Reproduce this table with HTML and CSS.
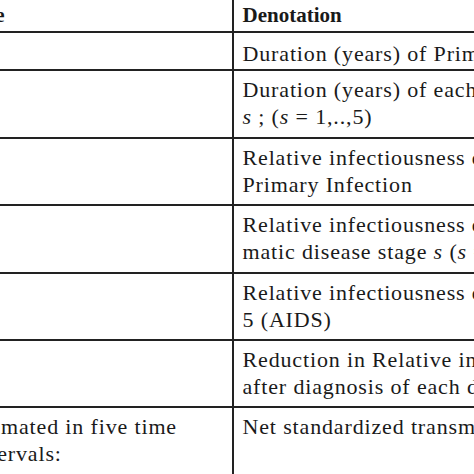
FILE: index.html
```html
<!DOCTYPE html>
<html>
<head>
<meta charset="utf-8">
<link rel="stylesheet" href="styles.css">
</head>
<body>
<div class="frame">
  <div class="table">
    <div class="cell left head first">Code</div>
    <div class="cell head">Denotation</div>

    <div class="cell left r1"></div>
    <div class="cell r1">Duration (years) of Primary Infection</div>

    <div class="cell left row"></div>
    <div class="cell row">Duration (years) of each disease stage<br><i>s</i> ; (<i>s</i> = 1,..,5)</div>

    <div class="cell left row"></div>
    <div class="cell row">Relative infectiousness of the<br>Primary Infection</div>

    <div class="cell left row"></div>
    <div class="cell row">Relative infectiousness of asympto-<br>matic disease stage <i>s</i> (<i>s</i> = 1,..,4)</div>

    <div class="cell left row"></div>
    <div class="cell row">Relative infectiousness of stage<br>5 (AIDS)</div>

    <div class="cell left row"></div>
    <div class="cell row">Reduction in Relative infectiousness<br>after diagnosis of each disease stage</div>

    <div class="cell left last hang">Estimated in five time<br>intervals:</div>
    <div class="cell last">Net standardized transmission rate</div>
  </div>
</div>
</body>
</html>
```

FILE: styles.css
```css
html, body {
  margin: 0;
  padding: 0;
  background: #ffffff;
}

.frame {
  width: 474px;
  height: 474px;
  overflow: hidden;
}

.table {
  display: grid;
  grid-template-columns: 269.5px 440px;
  margin-left: -36px;
  font-family: "Liberation Serif", "Times New Roman", serif;
  color: #1a1a1a;
}

.cell {
  font-size: 22px;
  letter-spacing: 0.85px;
  line-height: 27px;
  white-space: nowrap;
  padding-left: 9px;
  border-bottom: 2px solid #222222;
}

.cell.left {
  border-right: 2px solid #222222;
}

.cell i {
  font-style: italic;
}

.head {
  font-weight: bold;
  font-size: 21px;
  letter-spacing: 0;
  padding-top: 2.4px;
  padding-bottom: 2.1px;
}

.head.first {
  padding-left: 0;
  text-indent: -6px;
}

.r1 {
  padding-top: 6.6px;
  padding-bottom: 2.4px;
}

.row {
  padding-top: 5px;
  padding-bottom: 6.4px;
}

.last {
  padding-top: 5px;
  padding-bottom: 10px;
  border-bottom: none;
}

.hang {
  padding-left: 7.4px;
  text-indent: -8px;
}
```
